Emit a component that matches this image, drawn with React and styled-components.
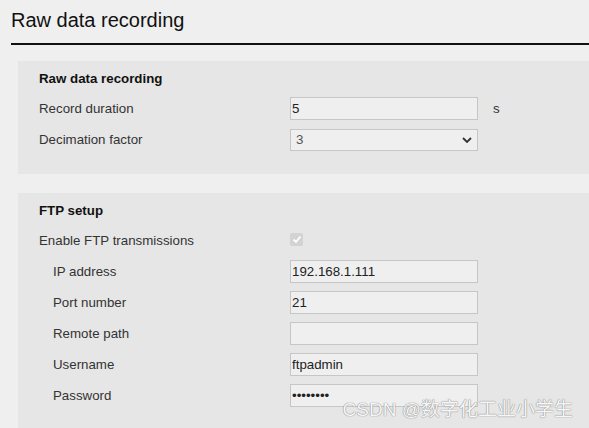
import React from 'react'
import styled, { createGlobalStyle } from 'styled-components'

const GlobalStyle = createGlobalStyle`
  html, body {
    margin: 0;
    padding: 0;
    background: #efefef;
    font-family: "Liberation Sans", Arial, sans-serif;
  }
`

const Page = styled.div`
  position: relative;
  width: 589px;
  height: 428px;
  overflow: hidden;
  background: #efefef;
`

const Header = styled.div`
  margin-left: 11px;
  padding-top: 9px;
  padding-bottom: 11px;
  border-bottom: 2px solid #111;
`

const Title = styled.h1`
  margin: 0;
  font-size: 20px;
  line-height: 23px;
  font-weight: normal;
  color: #111;
`

const Content = styled.div`
  margin-left: 18px;
  margin-top: 16px;
  display: flex;
  flex-direction: column;
  gap: 19px;
`

const Panel = styled.section`
  background: #e6e6e6;
  padding: 9px 0 19px 21px;
`

const PanelTitle = styled.h2`
  margin: 0 0 5px;
  font-size: 13.3px;
  line-height: 18px;
  font-weight: bold;
  color: #111;
`

const Row = styled.div`
  display: grid;
  grid-template-columns: 251px 188px auto;
  align-items: center;
  height: 31px;
`

const Label = styled.label`
  padding-left: ${p => (p.$indent ? '14px' : '0')};
  font-size: 13.3px;
  color: #333;
`

const Input = styled.input`
  box-sizing: border-box;
  display: block;
  width: 188px;
  height: 23px;
  margin: 0;
  padding: 0 1px;
  border: 1px solid #c6c6c6;
  background: #efefef;
  font-family: "Liberation Sans", Arial, sans-serif;
  font-size: 13.3px;
  color: #222;
  outline: none;
`

const SelectWrap = styled.div`
  position: relative;
  width: 188px;
  height: 22px;
`

const Select = styled.select`
  appearance: none;
  box-sizing: border-box;
  width: 100%;
  height: 100%;
  margin: 0;
  padding: 0 0 0 5px;
  border: 1px solid #c6c6c6;
  border-radius: 0;
  background: #efefef;
  font-family: "Liberation Sans", Arial, sans-serif;
  font-size: 13.3px;
  color: #555;
  outline: none;
`

const Chevron = styled.svg`
  position: absolute;
  right: 6px;
  top: 8px;
  pointer-events: none;
`

const Unit = styled.span`
  margin-left: 15px;
  font-size: 13.3px;
  color: #333;
`

const CheckBox = styled.span`
  display: flex;
  align-items: center;
  justify-content: center;
  width: 13px;
  height: 13px;
  margin-top: -3px;
  border-radius: 2px;
  background: #d3d3d3;
`

const Watermark = styled.div`
  position: absolute;
  right: 16px;
  bottom: 7px;
  font-family: "Liberation Sans", "Noto Sans CJK SC", sans-serif;
  font-size: 19px;
  line-height: 22px;
  color: #f6f6f6;
  text-shadow: 0 0 1px #888, 0 0 1px #888;
  white-space: nowrap;
`

const Field = ({ label, indent, children, unit }) => (
  <Row>
    <Label $indent={indent}>{label}</Label>
    <div>{children}</div>
    {unit ? <Unit>{unit}</Unit> : <span />}
  </Row>
)

export default function App() {
  return (
    <Page>
      <GlobalStyle />
      <Header>
        <Title>Raw data recording</Title>
      </Header>
      <Content>
        <Panel>
          <PanelTitle>Raw data recording</PanelTitle>
          <Field label="Record duration" unit="s">
            <Input defaultValue="5" />
          </Field>
          <Field label="Decimation factor">
            <SelectWrap>
              <Select defaultValue="3">
                <option value="1">1</option>
                <option value="2">2</option>
                <option value="3">3</option>
                <option value="4">4</option>
              </Select>
              <Chevron width="10" height="6" viewBox="0 0 10 6">
                <path d="M1 1l4 4 4-4" fill="none" stroke="#333" strokeWidth="1.8" />
              </Chevron>
            </SelectWrap>
          </Field>
        </Panel>
        <Panel>
          <PanelTitle>FTP setup</PanelTitle>
          <Field label="Enable FTP transmissions">
            <CheckBox>
              <svg width="10" height="9" viewBox="0 0 10 9">
                <path d="M1.5 4.5l2.5 2.5 4.5-5.5" fill="none" stroke="#fff" strokeWidth="1.8" />
              </svg>
            </CheckBox>
          </Field>
          <Field label="IP address" indent>
            <Input defaultValue="192.168.1.111" />
          </Field>
          <Field label="Port number" indent>
            <Input defaultValue="21" />
          </Field>
          <Field label="Remote path" indent>
            <Input defaultValue="" />
          </Field>
          <Field label="Username" indent>
            <Input defaultValue="ftpadmin" />
          </Field>
          <Field label="Password" indent>
            <Input type="password" defaultValue="ftpadmin" />
          </Field>
        </Panel>
      </Content>
      <Watermark>CSDN @数字化工业小学生</Watermark>
    </Page>
  )
}
